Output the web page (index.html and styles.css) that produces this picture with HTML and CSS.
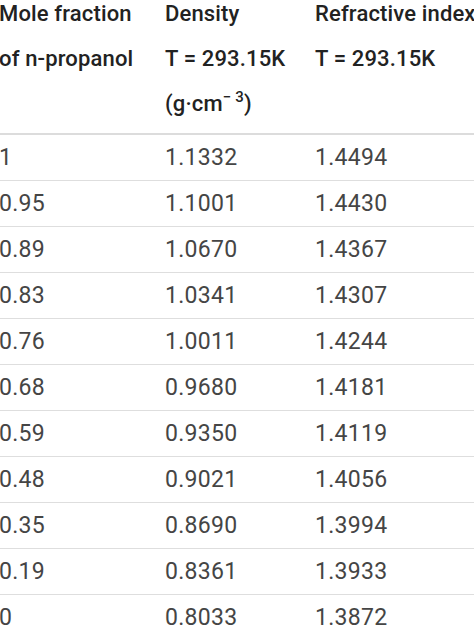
FILE: index.html
```html
<!DOCTYPE html>
<html>
<head>
<meta charset="utf-8">
<link rel="stylesheet" href="styles.css">
</head>
<body>
<div class="wrap">
<table class="data">
  <colgroup>
    <col class="c1"><col class="c2"><col class="c3">
  </colgroup>
  <thead>
    <tr>
      <th><span class="ln">Mole fraction</span><span class="ln">of n-propanol</span><span class="ln">&nbsp;</span></th>
      <th><span class="ln">Density</span><span class="ln">T = 293.15K</span><span class="ln">(g·cm<sup>− 3</sup>)</span></th>
      <th><span class="ln">Refractive index</span><span class="ln">T = 293.15K</span><span class="ln">&nbsp;</span></th>
    </tr>
  </thead>
  <tbody>
    <tr><td>1</td><td>1.1332</td><td>1.4494</td></tr>
    <tr><td>0.95</td><td>1.1001</td><td>1.4430</td></tr>
    <tr><td>0.89</td><td>1.0670</td><td>1.4367</td></tr>
    <tr><td>0.83</td><td>1.0341</td><td>1.4307</td></tr>
    <tr><td>0.76</td><td>1.0011</td><td>1.4244</td></tr>
    <tr><td>0.68</td><td>0.9680</td><td>1.4181</td></tr>
    <tr><td>0.59</td><td>0.9350</td><td>1.4119</td></tr>
    <tr><td>0.48</td><td>0.9021</td><td>1.4056</td></tr>
    <tr><td>0.35</td><td>0.8690</td><td>1.3994</td></tr>
    <tr><td>0.19</td><td>0.8361</td><td>1.3933</td></tr>
    <tr><td>0</td><td>0.8033</td><td>1.3872</td></tr>
  </tbody>
</table>
</div>
</body>
</html>
```

FILE: styles.css
```css
html, body {
  margin: 0;
  padding: 0;
  background: #ffffff;
  overflow: hidden;
}
.wrap {
  width: 474px;
  height: 630px;
  overflow: hidden;
}
.data {
  border-collapse: collapse;
  table-layout: fixed;
  width: 500px;
  margin-top: -9px;
  margin-left: -1px;
  font-family: Roboto, "Liberation Sans", sans-serif;
}
.c1 { width: 166px; }
.c2 { width: 150px; }
.c3 { width: 184px; }
th {
  text-align: left;
  font-size: 22px;
  font-weight: 500;
  letter-spacing: 0.15px;
  color: #222222;
  padding: 0 0 7px 0;
  border-bottom: 2px solid #dcdcdc;
  white-space: nowrap;
  vertical-align: top;
}
.ln {
  display: block;
  line-height: 45px;
  height: 45px;
}
sup {
  font-size: 15px;
  line-height: 0;
  vertical-align: 9px;
}
td {
  padding: 0;
  height: 45px;
  line-height: 45px;
  font-size: 23px;
  letter-spacing: 0.3px;
  color: #454545;
  font-weight: 400;
  border-bottom: 1px solid #dedede;
  white-space: nowrap;
}
```
